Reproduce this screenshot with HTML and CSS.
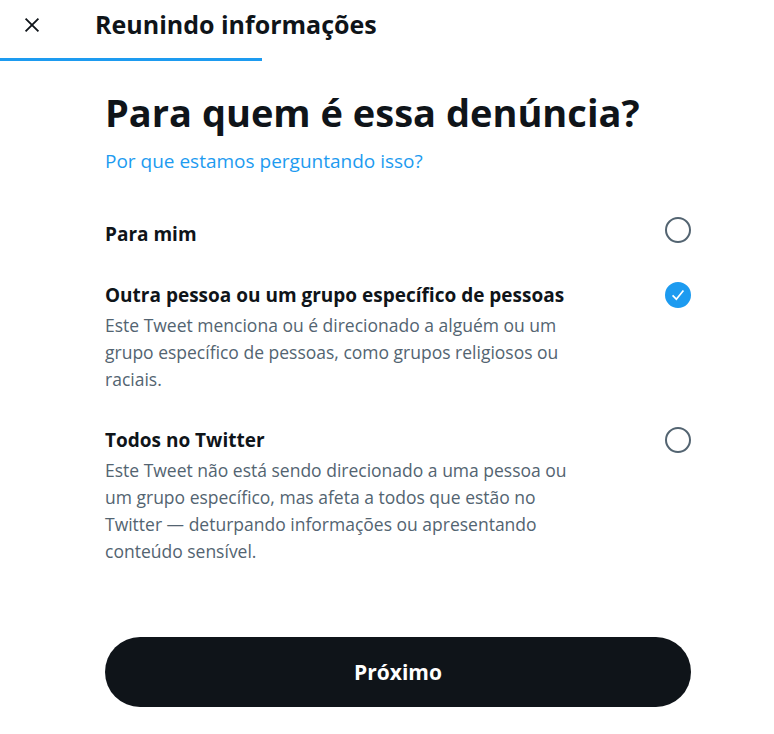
FILE: index.html
```html
<!DOCTYPE html>
<html lang="pt-BR">
<head>
    <meta charset="utf-8">
    <title>Reunindo informações</title>
    <link rel="stylesheet" href="styles.css">
</head>
<body>
    <div class="modal">
        <div class="modal-header">
            <button class="close-btn" aria-label="Fechar">
                <svg viewBox="0 0 24 24" width="22" height="22">
                    <path d="M5 5 L19 19 M19 5 L5 19" />
                </svg>
            </button>
            <span class="modal-title">Reunindo informações</span>
        </div>
        <div class="progress">
            <div class="progress-fill" style="width: 33.8%"></div>
        </div>

        <div class="content">
            <h1>Para quem é essa denúncia?</h1>
            <a class="why-link" href="#">Por que estamos perguntando isso?</a>

            <div class="options">
                <label class="option">
                    <div class="option-text">
                        <span class="option-title">Para mim</span>
                    </div>
                    <span class="radio"></span>
                </label>

                <label class="option">
                    <div class="option-text">
                        <span class="option-title">Outra pessoa ou um grupo específico de pessoas</span>
                        <span class="option-desc">Este Tweet menciona ou é direcionado a alguém ou um grupo específico de pessoas, como grupos religiosos ou raciais.</span>
                    </div>
                    <span class="radio checked">
                        <svg viewBox="0 0 24 24" width="20" height="20">
                            <path d="M5.5 12.5 L10 17 L18.5 6.5" />
                        </svg>
                    </span>
                </label>

                <label class="option">
                    <div class="option-text">
                        <span class="option-title">Todos no Twitter</span>
                        <span class="option-desc">Este Tweet não está sendo direcionado a uma pessoa ou um grupo específico, mas afeta a todos que estão no Twitter — deturpando informações ou apresentando conteúdo sensível.</span>
                    </div>
                    <span class="radio"></span>
                </label>
            </div>

            <button class="next-btn">Próximo</button>
        </div>
    </div>
</body>
</html>
```

FILE: styles.css
```css
:root {
    --text: #0f1419;
    --muted: #536471;
    --blue: #1d9bf0;
}

* {
    box-sizing: border-box;
}

body {
    margin: 0;
    font-family: "Open Sans", "Noto Sans", Arial, sans-serif;
    color: var(--text);
    background: #ffffff;
}

.modal {
    width: 774px;
    height: 734px;
    background: #ffffff;
}

.modal-header {
    display: flex;
    align-items: center;
    height: 58px;
    padding-left: 21px;
}

.close-btn {
    width: 22px;
    height: 22px;
    padding: 0;
    border: none;
    background: none;
    display: flex;
    margin-top: -8px;
}

.close-btn path {
    stroke: var(--text);
    stroke-width: 2;
    fill: none;
}

.modal-title {
    margin-left: 52px;
    margin-top: -10px;
    font-size: 25px;
    font-weight: 700;
}

.progress {
    height: 3px;
}

.progress-fill {
    height: 100%;
    background: var(--blue);
}

.content {
    padding: 28px 83px 0 105px;
}

h1 {
    margin: 0;
    font-size: 38px;
    line-height: 46px;
    font-weight: 700;
}

.why-link {
    display: block;
    margin-top: 14px;
    color: var(--blue);
    text-decoration: none;
    font-size: 19px;
    line-height: 24px;
}

.options {
    display: flex;
    flex-direction: column;
    gap: 33px;
    margin-top: 47px;
}

.option {
    display: flex;
    justify-content: space-between;
    align-items: flex-start;
}

.option-text {
    display: flex;
    flex-direction: column;
    width: 482px;
}

.option-title {
    font-size: 19px;
    line-height: 28px;
    font-weight: 700;
}

.option-desc {
    margin-top: 3px;
    color: var(--muted);
    font-size: 17.5px;
    line-height: 27px;
}

.radio {
    flex-shrink: 0;
    width: 26px;
    height: 26px;
    margin-top: 1px;
    border: 2px solid var(--muted);
    border-radius: 50%;
    display: flex;
    align-items: center;
    justify-content: center;
}

/* single-line option: circle sits a little higher */
.option:first-child .radio {
    margin-top: -3px;
}

.radio.checked {
    background: var(--blue);
    border-color: var(--blue);
}

.radio path {
    stroke: #ffffff;
    stroke-width: 2;
    fill: none;
}

.next-btn {
    display: block;
    width: 100%;
    height: 70px;
    margin-top: 72px;
    border: none;
    border-radius: 35px;
    background: var(--text);
    color: #ffffff;
    font-family: inherit;
    font-size: 21px;
    font-weight: 700;
}
```
